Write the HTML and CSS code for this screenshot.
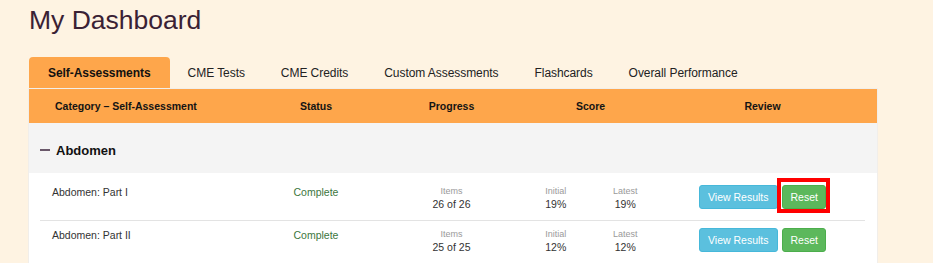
FILE: index.html
```html
<!DOCTYPE html>
<html lang="en">
<head>
<meta charset="utf-8">
<title>My Dashboard</title>
<link rel="stylesheet" href="styles.css">
</head>
<body>
<h1 class="title">My Dashboard</h1>
<nav class="tabs">
  <span class="tab active">Self-Assessments</span>
  <span class="tab">CME Tests</span>
  <span class="tab">CME Credits</span>
  <span class="tab">Custom Assessments</span>
  <span class="tab">Flashcards</span>
  <span class="tab">Overall Performance</span>
</nav>
<section class="panel">
  <div class="thead grid">
    <div class="hcat">Category – Self-Assessment</div>
    <div class="center">Status</div>
    <div class="center">Progress</div>
    <div class="center">Score</div>
    <div class="center">Review</div>
  </div>
  <div class="group"><span class="minus"></span>Abdomen</div>
  <div class="rows">
    <div class="row grid">
      <div class="cat">Abdomen: Part I</div>
      <div class="center status">Complete</div>
      <div class="center stat"><span class="lbl">Items</span><span class="val">26 of 26</span></div>
      <div class="score">
        <div class="stat"><span class="lbl">Initial</span><span class="val">19%</span></div>
        <div class="stat"><span class="lbl">Latest</span><span class="val">19%</span></div>
      </div>
      <div class="review">
        <button class="btn info">View Results</button>
        <button class="btn success flagged">Reset</button>
      </div>
    </div>
    <div class="row grid">
      <div class="cat">Abdomen: Part II</div>
      <div class="center status">Complete</div>
      <div class="center stat"><span class="lbl">Items</span><span class="val">25 of 25</span></div>
      <div class="score">
        <div class="stat"><span class="lbl">Initial</span><span class="val">12%</span></div>
        <div class="stat"><span class="lbl">Latest</span><span class="val">12%</span></div>
      </div>
      <div class="review">
        <button class="btn info">View Results</button>
        <button class="btn success">Reset</button>
      </div>
    </div>
  </div>
</section>
</body>
</html>
```
FILE: styles.css
```css
html, body {
  margin: 0;
  padding: 0;
  background: #fef3e2;
  font-family: "Liberation Sans", Arial, sans-serif;
  color: #222;
  overflow: hidden;
}

.title {
  margin: 5px 0 22px 29px;
  font-size: 26.5px;
  line-height: 30px;
  font-weight: normal;
  color: #3a2134;
}

.tabs {
  display: flex;
  margin-left: 29px;
  height: 31px;
}

.tab {
  display: flex;
  align-items: center;
  padding: 0 18px;
  font-size: 12px;
  letter-spacing: -0.06px;
  color: #222;
  border-radius: 4px 4px 0 0;
}

.tab.active {
  background: #fea64b;
  font-weight: bold;
  color: #111;
  padding: 0 19px;
  letter-spacing: -0.05px;
}

.panel {
  margin-left: 28px;
  width: 848px;
  border: 1px solid rgba(120, 90, 50, 0.1);
  background: #fff;
}

.grid {
  display: grid;
  grid-template-columns: 210px 132px 139px 139px 1fr;
}

.thead {
  background: #fea64b;
  height: 34px;
  align-items: center;
  padding: 0 12px 0 11px;
  font-size: 10.5px;
  font-weight: bold;
  color: #141414;
}

.hcat {
  padding-left: 15px;
}

.center {
  text-align: center;
}

.group {
  display: flex;
  align-items: center;
  height: 46px;
  padding: 4px 0 0 11px;
  background: #f4f4f4;
  font-size: 13px;
  font-weight: bold;
  color: #111;
}

.minus {
  display: inline-block;
  width: 10px;
  height: 2.5px;
  background: #6a586a;
  margin-right: 6px;
}

.rows {
  padding: 5px 12px 0 11px;
}

.row {
  padding: 7px 0 9px;
  border-bottom: 1px solid #e3e3e3;
  align-items: start;
  font-size: 10.5px;
  line-height: 14px;
  color: #333;
}

.cat {
  padding-left: 12px;
}

.status {
  color: #3c763d;
}

.stat {
  display: flex;
  flex-direction: column;
  align-items: center;
}

.lbl {
  font-size: 9px;
  line-height: 12px;
  color: #9a9a9a;
}

.val {
  line-height: 14px;
  color: #333;
}

.score {
  display: grid;
  grid-template-columns: 1fr 1fr;
}

.review {
  display: flex;
  justify-content: center;
  gap: 4px;
}

.btn {
  height: 24px;
  padding: 0 8.5px;
  border-radius: 3px;
  font-family: "Liberation Sans", Arial, sans-serif;
  font-size: 10.5px;
  color: #fff;
  cursor: pointer;
}

.btn.info {
  background: #5bc0de;
  border: 1px solid #46b8da;
}

.btn.success {
  background: #5cb85c;
  border: 1px solid #4cae4c;
  padding: 0 7.5px;
}

.flagged {
  position: relative;
}

.flagged::after {
  content: "";
  position: absolute;
  top: -8px;
  left: -6px;
  right: -5px;
  bottom: -5px;
  border: 4px solid #ff0000;
}
```
